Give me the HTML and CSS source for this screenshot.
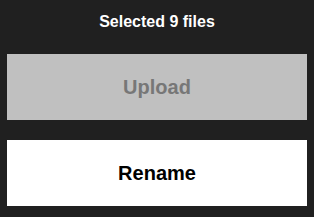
FILE: index.html
```html
<!DOCTYPE html>
<html lang="en">
<head>
    <meta charset="UTF-8">
    <meta name="viewport" content="width=device-width, initial-scale=1.0">
    <title>Selected files</title>
    <link rel="stylesheet" href="styles.css">
</head>
<body>

<div class="panel">
    <h1 class="title">Selected 9 files</h1>
    <button type="button" class="action upload" disabled>Upload</button>
    <button type="button" class="action rename">Rename</button>
</div>

</body>
</html>
```

FILE: styles.css
```css
/* General Styles */
body {
    font-family: "Liberation Sans", Arial, sans-serif;
    margin: 0;
    padding: 0;
    background-color: #202020;
}
.panel {
    display: flex;
    flex-direction: column;
    padding: 0 7px;
    gap: 20px;
}
.title {
    margin: 0;
    padding-top: 13px;
    height: 21px;
    color: white;
    font-size: 16px;
    font-weight: bold;
    text-align: center;
}
.action {
    height: 66px;
    border: none;
    border-radius: 0;
    font-family: inherit;
    font-size: 20px;
    font-weight: bold;
    cursor: pointer;
}
.action.upload {
    background-color: #c0c0c0;
    color: #777;
    cursor: default;
}
.action.rename {
    background-color: white;
    color: black;
}
```
